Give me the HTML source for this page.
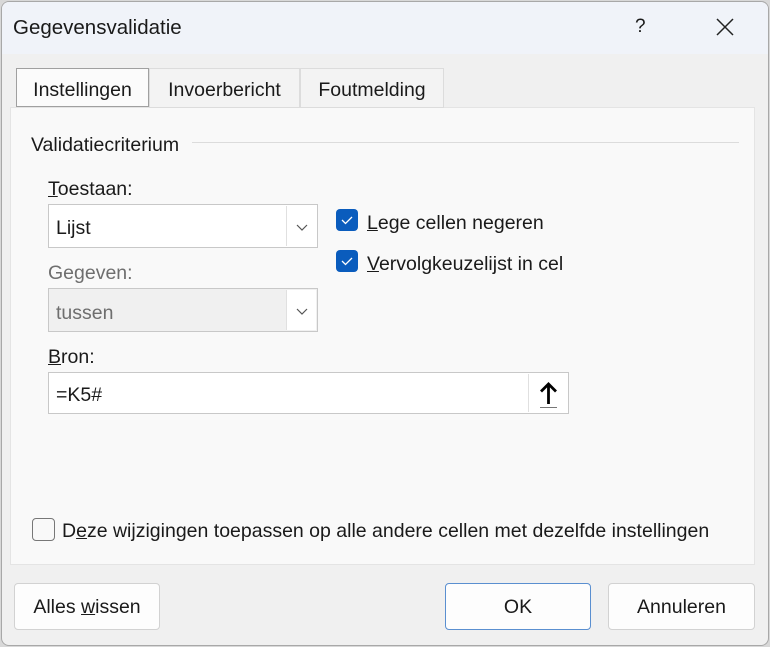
<!DOCTYPE html>
<html><head><meta charset="utf-8"><style>
*{box-sizing:border-box;margin:0;padding:0}
body{width:770px;height:647px;background:#d8d8d8;font-family:"Liberation Sans",sans-serif;font-size:19.5px;color:#1a1a1a;position:relative;overflow:hidden}
.win{position:absolute;left:1px;top:1px;width:768px;height:645px;background:#f0f0f0;border:1px solid #a8a8a8;border-radius:8px;overflow:hidden}
.in{position:absolute;left:-2px;top:-2px;width:770px;height:647px}
.title{position:absolute;left:0;top:0;width:100%;height:54px;background:#f0f3f9}
.abs{position:absolute;white-space:nowrap}
.tab{position:absolute;top:68px;height:40px;border:1px solid #dcdcdc;background:#f3f3f3;text-align:center;line-height:42px}
.panel{position:absolute;left:10px;top:107px;width:745px;height:458px;background:#f9f9f9;border:1px solid #e4e4e4}
.box{position:absolute;border:1px solid #c8c8c8;background:#fff}
.dd{position:absolute;right:1px;top:1px;bottom:1px;width:30px;background:#fff;border-left:1px solid #e0e0e0}
.cb{position:absolute;width:22px;height:22px;border-radius:4px;background:#0a5cbd}
.btn{position:absolute;top:583px;height:47px;background:#fdfdfd;border:1px solid #d2d2d2;border-radius:4px;text-align:center;line-height:47px}
u{text-decoration:underline}
</style></head><body>
<div class="win"><div class="in">
<div class="title"></div>
<div class="abs" style="left:13px;top:16px;font-size:20.5px">Gegevensvalidatie</div>
<div class="abs" style="left:635px;top:16px;font-size:19px">?</div>
<svg class="abs" style="left:716px;top:18px" width="18" height="18"><path d="M1 1L17 17M17 1L1 17" stroke="#222" stroke-width="1.5"/></svg>
<div class="panel"></div>
<div class="tab" style="left:16px;width:133px;background:#fbfbfb;border-color:#a0a0a0;height:39px">Instellingen</div>
<div class="tab" style="left:149px;width:151px">Invoerbericht</div>
<div class="tab" style="left:300px;width:144px">Foutmelding</div>
<div class="abs" style="left:31px;top:134px">Validatiecriterium</div>
<div class="abs" style="left:192px;top:142px;width:547px;height:1px;background:#dcdcdc"></div>
<div class="abs" style="left:48px;top:178px"><u>T</u>oestaan:</div>
<div class="box" style="left:48px;top:204px;width:270px;height:44px"><div class="abs" style="left:7px;top:12px">Lijst</div><div class="dd"><svg width="30" height="42"><path d="M10 19L15 24L20 19" fill="none" stroke="#555" stroke-width="1.2"/></svg></div></div>
<div class="abs" style="left:48px;top:262px;color:#6e6e6e">Gegeven:</div>
<div class="box" style="left:48px;top:288px;width:270px;height:44px;background:#f0f0f0"><div class="abs" style="left:7px;top:13px;color:#6e6e6e">tussen</div><div class="dd"><svg width="30" height="42"><path d="M10 19L15 24L20 19" fill="none" stroke="#555" stroke-width="1.2"/></svg></div></div>
<div class="abs" style="left:48px;top:346px"><u>B</u>ron:</div>
<div class="box" style="left:48px;top:372px;width:521px;height:42px"><div class="abs" style="left:7px;top:11px">=K5#</div><div class="dd" style="width:39px"><svg width="39" height="39"><path d="M19.5 30V10M12 17.5L19.5 10L27 17.5" fill="none" stroke="#000" stroke-width="2.8"/><path d="M11 33.5H28" stroke="#777" stroke-width="1"/></svg></div></div>
<div class="cb" style="left:336px;top:209px"><svg width="22" height="22"><path d="M6 11L9.5 14.5L16 8" fill="none" stroke="#fff" stroke-width="1.3"/></svg></div>
<div class="abs" style="left:367px;top:212px"><u>L</u>ege cellen negeren</div>
<div class="cb" style="left:336px;top:250px"><svg width="22" height="22"><path d="M6 11L9.5 14.5L16 8" fill="none" stroke="#fff" stroke-width="1.3"/></svg></div>
<div class="abs" style="left:367px;top:253px"><u>V</u>ervolgkeuzelijst in cel</div>
<div class="abs" style="left:32px;top:518px;width:23px;height:23px;border:1px solid #777;border-radius:4px;background:#f9f9f9"></div>
<div class="abs" style="left:62px;top:520px">D<u>e</u>ze wijzigingen toepassen op alle andere cellen met dezelfde instellingen</div>
<div class="btn" style="left:14px;width:146px">Alles <u>w</u>issen</div>
<div class="btn" style="left:445px;width:146px;border-color:#5a8fd0">OK</div>
<div class="btn" style="left:608px;width:147px">Annuleren</div>
</div></div>
</body></html>
